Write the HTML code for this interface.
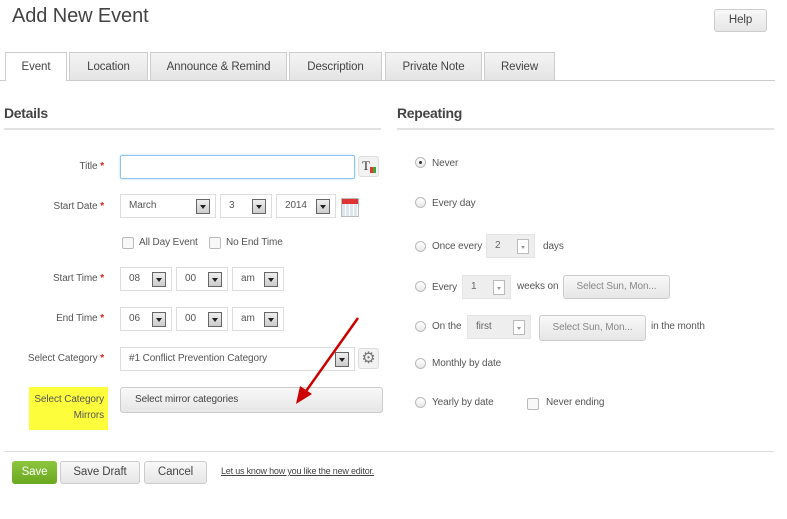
<!DOCTYPE html>
<html><head><style>
*{box-sizing:border-box;margin:0;padding:0}
body{width:787px;height:519px;background:#fff;font-family:"Liberation Sans",sans-serif;color:#444;position:relative;overflow:hidden;font-size:10px;letter-spacing:-0.1px}
.a{position:absolute;white-space:nowrap}
.tab{position:absolute;top:52px;height:28px;background:linear-gradient(#f4f4f4,#e4e4e4);border:1px solid #ccc;border-bottom:none;font-size:11.5px;text-align:center;line-height:28px;color:#444}
.lbl{position:absolute;width:104px;left:0;text-align:right;font-size:10px;color:#555;white-space:nowrap}
.lbl b{color:#e02020;font-weight:bold}
.sel{position:absolute;height:24px;border:1px solid #ddd;background:#fff;font-size:10px;color:#555;padding-left:8px;line-height:22px;white-space:nowrap}
.sel i{position:absolute;right:5px;top:4px;width:14px;height:15px;border:1px solid #666;background:linear-gradient(#eee,#ccc)}
.sel i:after{content:"";position:absolute;left:3px;top:5px;border:3px solid transparent;border-top:4px solid #222}
.cb{position:absolute;width:12px;height:12px;border:1px solid #bbb;border-radius:2px;background:#f8f8f8}
.rd{position:absolute;left:415px;width:11px;height:11px;border:1px solid #bbb;border-radius:50%;background:linear-gradient(#fff,#e8e8e8)}
.rt{position:absolute;left:432px;font-size:10px;color:#555;white-space:nowrap}
.gs{position:absolute;height:24px;background:#eee;border:1px solid #e4e4e4;color:#666;padding-left:8px;line-height:22px}
.gs i{position:absolute;right:5px;top:4px;width:12px;height:15px;border:1px solid #bbb;background:#fff}
.gs i:after{content:"";position:absolute;left:3px;top:6px;border:2px solid transparent;border-top:3px solid #999}
.btn{position:absolute;border:1px solid #ccc;border-radius:3px;background:linear-gradient(#f8f8f8,#e6e6e6);text-align:center;color:#444;white-space:nowrap}
</style></head><body>
<div class="a" style="left:12px;top:5px;font-size:20px;color:#444">Add New Event</div>
<div class="btn" style="left:714px;top:9px;width:53px;height:23px;line-height:21px;font-size:11.5px">Help</div>

<div class="tab" style="left:5px;width:62px;background:#fff;height:29px">Event</div>
<div class="tab" style="left:69px;width:79px">Location</div>
<div class="tab" style="left:150px;width:137px">Announce &amp; Remind</div>
<div class="tab" style="left:289px;width:93px">Description</div>
<div class="tab" style="left:385px;width:97px">Private Note</div>
<div class="tab" style="left:484px;width:71px">Review</div>
<div class="a" style="left:67px;top:80px;width:708px;height:1px;background:#ccc"></div>
<div class="a" style="left:0;top:80px;width:5px;height:1px;background:#ccc"></div>

<div class="a" style="left:4px;top:105px;font-size:14px;font-weight:bold;color:#444;letter-spacing:-0.3px">Details</div>
<div class="a" style="left:4px;top:128px;width:377px;height:2px;background:#e2e2e2"></div>
<div class="a" style="left:397px;top:105px;font-size:14px;font-weight:bold;color:#444;letter-spacing:-0.3px">Repeating</div>
<div class="a" style="left:397px;top:128px;width:377px;height:2px;background:#e2e2e2"></div>

<div class="lbl" style="top:161px">Title <b>*</b></div>
<div class="a" style="left:120px;top:155px;width:235px;height:24px;border:1px solid #8ec4ee;box-shadow:0 0 3px #bfe0f8;border-radius:2px"></div>
<div class="a" style="left:358px;top:156px;width:21px;height:21px;border:1px solid #ddd;border-radius:3px;background:#f2f2f2;font-family:'Liberation Serif',serif;font-size:13px;padding-left:3px;line-height:18px;color:#333">T<span style="position:absolute;left:11px;top:10px;width:6px;height:6px;background:linear-gradient(90deg,#e33 50%,#3a3 50%)"></span></div>

<div class="lbl" style="top:201px">Start Date <b>*</b></div>
<div class="sel" style="left:120px;top:194px;width:96px">March<i></i></div>
<div class="sel" style="left:220px;top:194px;width:52px">3<i></i></div>
<div class="sel" style="left:276px;top:194px;width:60px">2014<i></i></div>
<div class="a" style="left:341px;top:198px;width:18px;height:19px;border:1px solid #bbb;background:repeating-linear-gradient(90deg,#dde6ee 0 3px,#fff 3px 4px)"><div style="height:5px;background:#d33"></div></div>

<div class="cb" style="left:122px;top:237px"></div><div class="a" style="left:139px;top:237px;color:#555">All Day Event</div>
<div class="cb" style="left:209px;top:237px"></div><div class="a" style="left:226px;top:237px;color:#555">No End Time</div>

<div class="lbl" style="top:273px">Start Time <b>*</b></div>
<div class="sel" style="left:120px;top:267px;width:52px">08<i></i></div>
<div class="sel" style="left:176px;top:267px;width:52px">00<i></i></div>
<div class="sel" style="left:232px;top:267px;width:52px">am<i></i></div>

<div class="lbl" style="top:313px">End Time <b>*</b></div>
<div class="sel" style="left:120px;top:307px;width:52px">06<i></i></div>
<div class="sel" style="left:176px;top:307px;width:52px">00<i></i></div>
<div class="sel" style="left:232px;top:307px;width:52px">am<i></i></div>

<div class="lbl" style="top:353px">Select Category <b>*</b></div>
<div class="sel" style="left:120px;top:347px;width:235px">#1 Conflict Prevention Category<i></i></div>
<div class="a" style="left:358px;top:348px;width:21px;height:21px;border:1px solid #ddd;border-radius:3px;background:#f2f2f2;color:#777;font-size:16px;text-align:center;line-height:19px">⚙</div>

<div class="a" style="left:29px;top:387px;width:79px;height:43px;background:#fdfd3c;text-align:right;padding:5px 4px 0 0;line-height:16px;color:#555;font-size:10px">Select Category<br>Mirrors</div>
<div class="btn" style="left:120px;top:387px;width:263px;height:26px;line-height:24px;text-align:left;padding-left:14px;font-size:10px">Select mirror categories</div>

<svg class="a" style="left:290px;top:312px" width="75" height="95"><line x1="68" y1="6" x2="14" y2="82" stroke="#c00" stroke-width="2.5"/><polygon points="6,92 10,74 22,82" fill="#c00"/></svg>

<div class="a" style="left:4px;top:451px;width:770px;height:1px;background:#ddd"></div>
<div class="a" style="left:12px;top:461px;width:45px;height:23px;border-radius:3px;background:linear-gradient(#8cc63e,#6aa81e);color:#fff;font-size:11.5px;text-align:center;line-height:23px">Save</div>
<div class="btn" style="left:60px;top:461px;width:80px;height:23px;line-height:21px;font-size:11.5px">Save Draft</div>
<div class="btn" style="left:144px;top:461px;width:63px;height:23px;line-height:21px;font-size:11.5px">Cancel</div>
<div class="a" style="left:221px;top:466px;font-size:9px;text-decoration:underline;color:#444;letter-spacing:-0.2px">Let us know how you like the new editor.</div>

<div class="rd" style="top:157px"><div style="width:3px;height:3px;background:#333;border-radius:50%;margin:3px"></div></div><div class="rt" style="top:158px">Never</div>
<div class="rd" style="top:197px"></div><div class="rt" style="top:198px">Every day</div>
<div class="rd" style="top:241px"></div><div class="rt" style="top:241px">Once every</div>
<div class="gs" style="left:486px;top:234px;width:49px">2<i></i></div>
<div class="rt" style="left:543px;top:241px">days</div>
<div class="rd" style="top:281px"></div><div class="rt" style="top:282px">Every</div>
<div class="gs" style="left:462px;top:275px;width:49px">1<i></i></div>
<div class="rt" style="left:517px;top:281px">weeks on</div>
<div class="btn" style="left:563px;top:275px;width:107px;height:24px;line-height:22px;color:#888;font-size:10px">Select Sun, Mon...</div>
<div class="rd" style="top:321px"></div><div class="rt" style="top:321px">On the</div>
<div class="gs" style="left:467px;top:315px;width:64px">first<i></i></div>
<div class="btn" style="left:539px;top:315px;width:107px;height:26px;line-height:24px;color:#888;font-size:10px">Select Sun, Mon...</div>
<div class="rt" style="left:651px;top:321px">in the month</div>
<div class="rd" style="top:358px"></div><div class="rt" style="top:358px">Monthly by date</div>
<div class="rd" style="top:397px"></div><div class="rt" style="top:397px">Yearly by date</div>
<div class="cb" style="left:527px;top:398px"></div><div class="rt" style="left:546px;top:397px">Never ending</div>
</body></html>
